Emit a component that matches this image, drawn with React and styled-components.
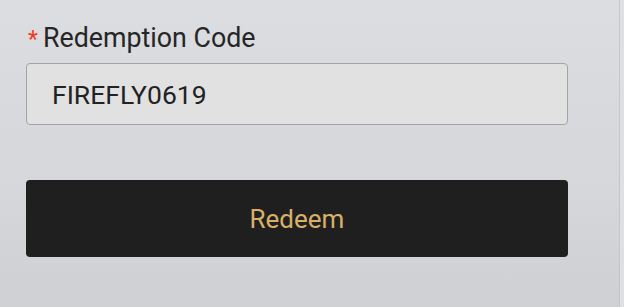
import React from 'react';
import styled, { createGlobalStyle } from 'styled-components';

const GlobalStyle = createGlobalStyle`
  html, body {
    margin: 0;
    padding: 0;
    background: #dfe0e3;
  }
  body {
    font-family: Roboto, "Liberation Sans", sans-serif;
  }
`;

const Page = styled.div`
  width: 624px;
  height: 307px;
  display: flex;
  overflow: hidden;
`;

const Panel = styled.div`
  width: 620px;
  height: 100%;
  box-sizing: border-box;
  padding: 20px 0 0 26px;
  background: linear-gradient(180deg, #dcdde0 0%, #d6d7da 60%, #cfd0d3 100%);
  border-right: 1px solid #c5c6c9;
`;

const Form = styled.form`
  width: 542px;
  display: flex;
  flex-direction: column;
`;

const Label = styled.label`
  display: flex;
  align-items: baseline;
  height: 36px;
  font-size: 26.8px;
  line-height: 36px;
  color: #262626;
  padding-left: 2px;
`;

const Star = styled.span`
  color: #f2391c;
  font-size: 23px;
  margin-right: 5px;
`;

const Input = styled.input`
  margin-top: 7px;
  height: 62px;
  box-sizing: border-box;
  border: 1px solid #a3a4a6;
  border-radius: 4px;
  background: #e1e1e1;
  padding: 0 0 0 25px;
  font-family: inherit;
  font-size: 26.5px;
  color: #222;
  outline: none;
`;

const Button = styled.button`
  margin-top: 55px;
  height: 77px;
  border: none;
  border-radius: 4px;
  background: #1f1f1f;
  color: #d8b067;
  font-family: inherit;
  font-size: 26px;
  cursor: pointer;
`;

export default function App() {
  return (
    <>
      <GlobalStyle />
      <Page>
        <Panel>
          <Form onSubmit={(e) => e.preventDefault()}>
            <Label>
              <Star>*</Star>Redemption Code
            </Label>
            <Input defaultValue="FIREFLY0619" />
            <Button type="submit">Redeem</Button>
          </Form>
        </Panel>
      </Page>
    </>
  );
}
